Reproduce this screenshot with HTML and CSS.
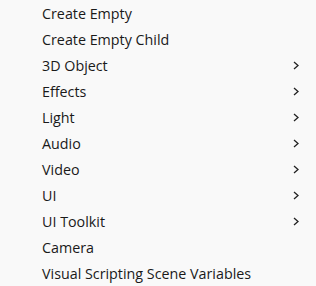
FILE: index.html
```html
<!DOCTYPE html>
<html lang="en">
<head>
  <meta charset="UTF-8" />
  <title>GameObject menu</title>
  <link rel="stylesheet" href="styles.css">
</head>
<body>
  <ul class="menu">
    <li class="item">Create Empty</li>
    <li class="item">Create Empty Child</li>
    <li class="item sub">3D Object <svg class="arrow" viewBox="0 0 6 9"><polyline points="1,1 5,4.5 1,8"/></svg></li>
    <li class="item sub">Effects <svg class="arrow" viewBox="0 0 6 9"><polyline points="1,1 5,4.5 1,8"/></svg></li>
    <li class="item sub">Light <svg class="arrow" viewBox="0 0 6 9"><polyline points="1,1 5,4.5 1,8"/></svg></li>
    <li class="item sub">Audio <svg class="arrow" viewBox="0 0 6 9"><polyline points="1,1 5,4.5 1,8"/></svg></li>
    <li class="item sub">Video <svg class="arrow" viewBox="0 0 6 9"><polyline points="1,1 5,4.5 1,8"/></svg></li>
    <li class="item sub">UI <svg class="arrow" viewBox="0 0 6 9"><polyline points="1,1 5,4.5 1,8"/></svg></li>
    <li class="item sub">UI Toolkit <svg class="arrow" viewBox="0 0 6 9"><polyline points="1,1 5,4.5 1,8"/></svg></li>
    <li class="item">Camera</li>
    <li class="item">Visual Scripting Scene Variables</li>
  </ul>
</body>
</html>
```

FILE: styles.css
```css
body {
  margin: 0;
  background-color: #f9f9f9;
  font-family: "Open Sans", "Noto Sans", sans-serif;
  font-size: 14.3px;
  color: #1a1a1a;
}
.menu {
  list-style: none;
  margin: 0;
  padding: 0;
}
.item {
  display: flex;
  align-items: center;
  justify-content: space-between;
  height: 26px;
  padding: 0 17px 0 42px;
}
.arrow {
  width: 6px;
  height: 9px;
  fill: none;
  stroke: #222;
  stroke-width: 1.3;
}
```
